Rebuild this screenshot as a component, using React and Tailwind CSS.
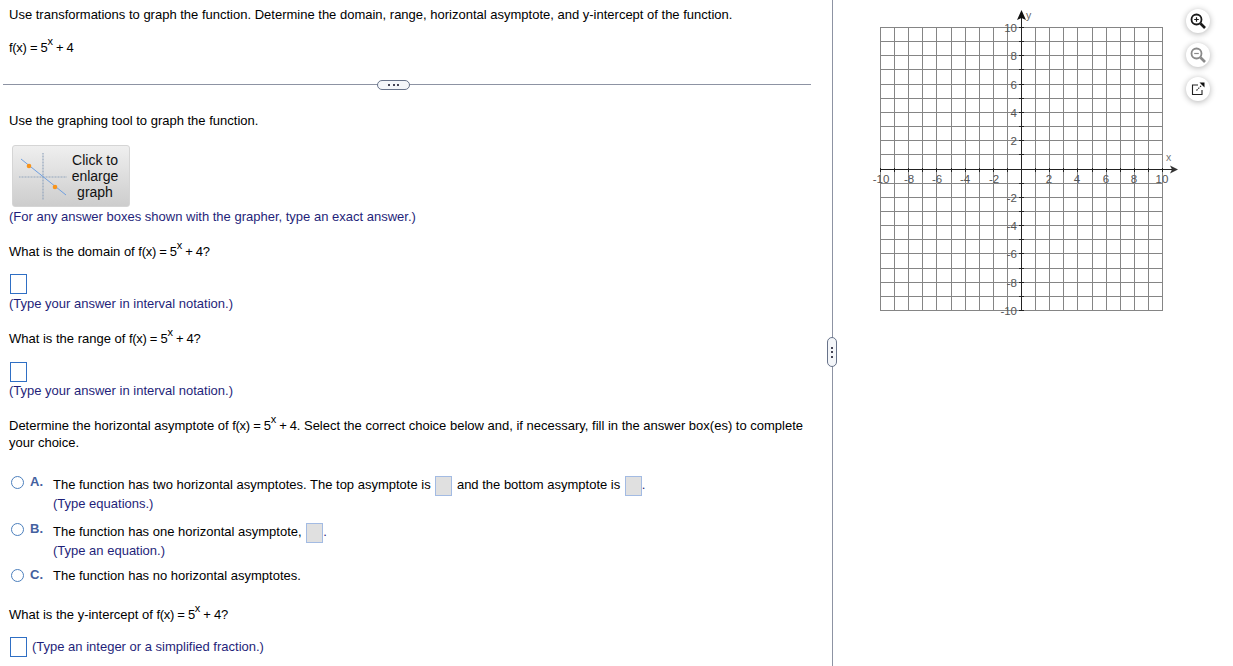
import React from "react";

const XS = [880,894,908,922,936,951,965,979,993,1007,1021,1035,1049,1063,1077,1092,1106,1120,1134,1148,1162];
const YS = [27,41,55,69,84,98,112,126,140,154,169,183,197,211,225,239,253,268,282,296,310];

function Fx({ q }) {
  return (
    <span className="tracking-[-0.3px]">
      f(x) = 5<span className="text-[11px] leading-none relative -top-[7px] mr-[3px] tracking-normal">x</span>
      + 4{q}
    </span>
  );
}

function Box() {
  return <span className="block w-[17px] h-[20px] border border-[#2f6fc4] bg-white shrink-0" />;
}

function Dis() {
  return <span className="inline-block align-middle w-[17px] h-[20px] border border-[#a3bbe3] bg-[#e0e0e0]" />;
}

function Choice({ l, children, cls, rc, lc }) {
  return (
    <div className={"flex " + cls}>
      <span className={"w-[13px] h-[13px] ml-[2px] rounded-full border-[1.5px] border-[#4c7fbd] shrink-0 " + rc} />
      <span className={"w-[14px] ml-[6px] shrink-0 font-bold text-[#44619f] text-[13px] leading-[17px] " + lc}>{l}</span>
      <div className="ml-[9px]">{children}</div>
    </div>
  );
}

function Graph() {
  const xl = [[-10,881],[-8,909],[-6,937],[-4,965],[-2,994],[2,1049],[4,1077],[6,1106],[8,1134],[10,1162]];
  const yl = [[10,27],[8,55],[6,84],[4,112],[2,140],[-2,197],[-4,225],[-6,253],[-8,282],[-10,310]];
  const ox = 870, oy = 0;
  return (
    <svg width="316" height="330" className="block shrink-0" style={{ fontFamily: "'Liberation Sans', sans-serif" }}>
      <g transform={`translate(${-ox} ${-oy})`} shapeRendering="crispEdges">
        {XS.map((x) => <line key={x} x1={x + 0.5} x2={x + 0.5} y1="27" y2="311" stroke="#858585" />)}
        {YS.map((y) => <line key={y} y1={y + 0.5} y2={y + 0.5} x1="880" x2="1163" stroke="#858585" />)}
        <line x1="1021.5" x2="1021.5" y1="17" y2="311" stroke="#222" />
        <line y1="169.5" y2="169.5" x1="880" x2="1172" stroke="#222" />
        {XS.map((x) => <line key={x} x1={x + 0.5} x2={x + 0.5} y1="168" y2="172" stroke="#222" />)}
        {YS.map((y) => <line key={y} y1={y + 0.5} y2={y + 0.5} x1="1019" x2="1024" stroke="#222" />)}
      </g>
      <g transform={`translate(${-ox} ${-oy})`}>
        <polygon points="1021.5,10 1026,20 1021.5,18 1017,20" fill="#111" />
        <polygon points="1178,169.5 1170,165.5 1172,169.5 1170,173.5" fill="#333" />
        <text x="1026" y="19" fontSize="10.5" fill="#666">y</text>
        <text x="1166" y="161" fontSize="10.5" fill="#777">x</text>
        {xl.map(([v, x]) => (
          <text key={v} x={x} y="183" fontSize="11.5" fill="#555" textAnchor="middle">{v < 0 ? "-" + -v : v}</text>
        ))}
        {yl.map(([v, y]) => (
          <text key={v} x={1017} y={y + 4.5} fontSize="11.5" fill="#555" textAnchor="end">{v < 0 ? "-" + -v : v}</text>
        ))}
      </g>
    </svg>
  );
}

function Tool({ children }) {
  return (
    <div className="w-[24px] h-[24px] rounded-full bg-white shadow-[0_1px_6px_rgba(0,0,0,0.3)] flex items-center justify-center">
      {children}
    </div>
  );
}

function Thumb() {
  return (
    <svg width="52" height="52" viewBox="0 0 52 52" className="shrink-0">
      <line x1="26" y1="3" x2="26" y2="50" stroke="#93a6bd" strokeWidth="1.2" strokeDasharray="1 0.5" />
      <line x1="2" y1="27" x2="50" y2="27" stroke="#93a6bd" strokeWidth="1.2" strokeDasharray="1 0.5" />
      <line x1="4" y1="9" x2="49" y2="45" stroke="#6f9fe0" strokeWidth="1" />
      <circle cx="12" cy="16" r="2.3" fill="#f7941d" />
      <circle cx="38" cy="37" r="2.3" fill="#f7941d" />
    </svg>
  );
}

export default function App() {
  return (
    <div className="relative flex w-[1233px] h-[666px] overflow-hidden bg-white text-black text-[13px] leading-[17px] font-['Liberation_Sans',Arial,sans-serif]">
      <div className="relative w-[833px] h-[666px] shrink-0 border-r border-[#8d93a3]">
        <div className="h-[85px] ml-[3px] mr-[21px] border-b border-[#8d93a3] pl-[6px] pt-[6px]">
          <p>Use transformations to graph the function. Determine the domain, range, horizontal asymptote, and y-intercept of the function.</p>
          <p className="mt-[16px]"><Fx q="" /></p>
        </div>
        <div className="absolute left-[377px] top-[80px] w-[33px] h-[10px] rounded-full border border-[#68738a] bg-[#f4f6f9] flex items-center justify-center gap-[2.5px]">
          <i className="w-[2px] h-[2px] bg-[#445]" /><i className="w-[2px] h-[2px] bg-[#445]" /><i className="w-[2px] h-[2px] bg-[#445]" />
        </div>
        <div className="absolute left-[827px] top-[337px] w-[10px] h-[30px] rounded-full border border-[#68738a] bg-[#f4f6f9] flex flex-col items-center justify-center gap-[2.5px]">
          <i className="w-[2px] h-[2px] bg-[#445]" /><i className="w-[2px] h-[2px] bg-[#445]" /><i className="w-[2px] h-[2px] bg-[#445]" />
        </div>
        <div className="pl-[9px] pr-[24px]">
          <p className="mt-[27px]">Use the graphing tool to graph the function.</p>
          <div className="mt-[16px] ml-[3px] w-[118px] h-[62px] rounded-[3px] border border-[#d5d5d5] bg-gradient-to-b from-[#efefef] to-[#cdcdcd] flex items-center text-[#111] text-[14px] leading-[16px]">
            <span className="ml-[4px]"><Thumb /></span>
            <span className="ml-[1px] w-[50px] text-center">Click to enlarge graph</span>
          </div>
          <p className="mt-[1px] text-[#1f1f7a]">(For any answer boxes shown with the grapher, type an exact answer.)</p>
          <p className="mt-[18px]">What is the domain of <Fx q="?" /></p>
          <div className="mt-[14px] mb-[1px] ml-[1px]"><Box /></div>
          <p className="text-[#1f1f7a]">(Type your answer in interval notation.)</p>
          <p className="mt-[18px]">What is the range of <Fx q="?" /></p>
          <div className="mt-[15px] ml-[1px]"><Box /></div>
          <p className="text-[#1f1f7a]">(Type your answer in interval notation.)</p>
          <p className="mt-[18px]">Determine the horizontal asymptote of <Fx q="" />. Select the correct choice below and, if necessary, fill in the answer box(es) to complete your choice.</p>
          <Choice l="A." cls="mt-[25px]" rc="mt-0" lc="-mt-[3px]">
            <p className="-mb-[1px]">The function has two horizontal asymptotes. The top asymptote is <span className="mx-[1px]"><Dis /></span> and the bottom asymptote is <span className="ml-[1px]"><Dis /></span><span className="text-[#1f1f7a]">.</span></p>
            <p className="text-[#1f1f7a]">(Type equations.)</p>
          </Choice>
          <Choice l="B." cls="mt-[11px]" rc="mt-0" lc="-mt-[3px]">
            <p className="-mb-[1px]">The function has one horizontal asymptote, <span className="ml-[1px]"><Dis /></span><span className="text-[#1f1f7a]">.</span></p>
            <p className="text-[#1f1f7a]">(Type an equation.)</p>
          </Choice>
          <Choice l="C." cls="mt-[8px]" rc="mt-[2px]" lc="-mt-[1px]"><p>The function has no horizontal asymptotes.</p></Choice>
          <p className="mt-[22px]">What is the y-intercept of <Fx q="?" /></p>
          <div className="mt-[14px] ml-[1px] flex items-start gap-[5px]"><Box /><span className="mt-[1px] text-[#1f1f7a]">(Type an integer or a simplified fraction.)</span></div>
        </div>
      </div>
      <div className="ml-[37px]"><Graph /></div>
      <div className="pt-[9px] flex flex-col gap-[10px]">
        <Tool>
          <svg width="18" height="18" viewBox="0 0 18 18" fill="none" stroke="#1a1a1a" strokeWidth="1.8"><circle cx="7.5" cy="7.5" r="5" /><path d="M5.2 7.5h4.6M7.5 5.2v4.6" strokeWidth="1.2" /><path d="M11.5 11.5L16 16" strokeWidth="2.6" /></svg>
        </Tool>
        <Tool>
          <svg width="18" height="18" viewBox="0 0 18 18" fill="none" stroke="#8a8a8a" strokeWidth="1.8"><circle cx="7.5" cy="7.5" r="5" /><path d="M5.2 7.5h4.6" strokeWidth="1.2" /><path d="M11.5 11.5L16 16" strokeWidth="2.6" /></svg>
        </Tool>
        <Tool>
          <svg width="16" height="16" viewBox="0 0 16 16" fill="none" stroke="#222" strokeWidth="1.1"><path d="M8 4H2.5v9.5H12V9" /><path d="M6.5 9.5L12 4" strokeDasharray="1.5 1" /><polygon points="9.5,1.5 14.5,1.5 14.5,6.5" fill="#111" stroke="none" /></svg>
        </Tool>
      </div>
    </div>
  );
}
